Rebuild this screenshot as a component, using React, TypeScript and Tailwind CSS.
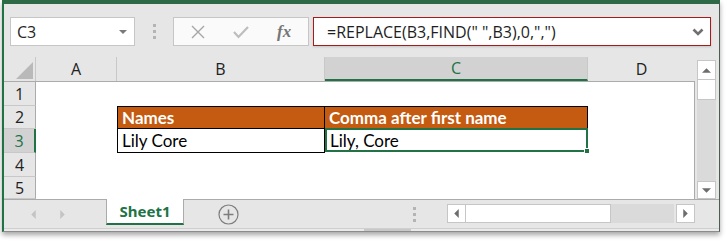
import React from 'react';

const colWidths = ['w-[81px]', 'w-[208px]', 'w-[263px]', 'flex-1'];

const rows = [
  { n: 1, h: 'h-[24px]' },
  { n: 2, h: 'h-[23px]' },
  { n: 3, h: 'h-[24px]' },
  { n: 4, h: 'h-[24px]' },
  { n: 5, h: 'h-[22px]' },
];

const cellFont = { fontFamily: 'Lato, "Open Sans", sans-serif' };
const uiFont = { fontFamily: '"Open Sans", "Noto Sans", sans-serif' };

const Tri = ({ dir, color = '#6d6d6d', size = 8 }: { dir: 'up' | 'down' | 'left' | 'right'; color?: string; size?: number }) => {
  const pts = {
    up: '0,6 4,2 8,6',
    down: '0,2 8,2 4,6',
    left: '6,0 6,8 2,4',
    right: '2,0 2,8 6,4',
  }[dir];
  return (
    <svg width={size} height={size} viewBox="0 0 8 8">
      <polygon points={pts} fill={color} />
    </svg>
  );
};

function Cell({ row, col }: { row: number; col: number }) {
  const w = colWidths[col];
  if (row === 2 && (col === 1 || col === 2)) {
    return (
      <div
        className={`${w} h-full bg-[#c55a11] border border-black ${col === 2 ? 'border-l-0' : ''} flex items-center pl-[4px] text-white font-bold text-[17px]`}
        style={cellFont}
      >
        {col === 1 ? 'Names' : 'Comma after first name'}
      </div>
    );
  }
  if (row === 3 && col === 1) {
    return (
      <div className={`${w} h-full border border-t-0 border-black flex items-center pl-[4px] pt-[1px] text-[17px] text-black`} style={cellFont}>
        Lily Core
      </div>
    );
  }
  if (row === 3 && col === 2) {
    return (
      <div className={`${w} h-full relative border-2 border-[#217346] -mt-[1px] flex items-center pl-[3px] pt-[1px] text-[17px] text-black`} style={cellFont}>
        Lily, Core
        <div className="absolute right-[-4px] bottom-[-4px] w-[6px] h-[6px] bg-[#217346] border border-white" />
      </div>
    );
  }
  return <div className={`${w} h-full`} />;
}

export default function App() {
  return (
    <div className="w-[728px] h-[241px] bg-white pl-[2px]">
      <div className="w-[718px] h-[232px] bg-[#e6e6e6] border-l-2 border-l-[#217346] border-t-4 border-t-[#2e6a46] border-r border-r-[#4d5b52] border-b border-b-[#8c8c8c] shadow-[0_3px_5px_rgba(0,0,0,0.35)] flex flex-col">
        {/* formula bar */}
        <div className="h-[53px] pt-[13px] pl-[6px] flex items-start">
          <div className="w-[125px] h-[29px] bg-white border border-[#c6c6c6] flex items-center justify-between pl-[6px] pr-[7px] text-[16px] text-[#262626]" style={uiFont}>
            <span>C3</span>
            <Tri dir="down" color="#7a7a7a" />
          </div>
          <div className="w-[38px] h-[29px] flex flex-col items-center justify-center gap-[3px]">
            <div className="w-[3px] h-[3px] bg-[#b4b4b4]" />
            <div className="w-[3px] h-[3px] bg-[#b4b4b4]" />
            <div className="w-[3px] h-[3px] bg-[#b4b4b4]" />
          </div>
          <div className="w-[136px] h-[29px] bg-[#fafafa] border border-[#c6c6c6] flex items-center">
            <svg width="14" height="14" viewBox="0 0 14 14" className="ml-[17px]">
              <path d="M1 1 L13 13 M13 1 L1 13" stroke="#a6a6a6" strokeWidth="1.4" />
            </svg>
            <svg width="16" height="14" viewBox="0 0 16 14" className="ml-[28px]">
              <path d="M1 7 L5.5 12 L15 2" stroke="#bdbdbd" strokeWidth="2.2" fill="none" />
            </svg>
            <span className="ml-[28px] italic font-bold text-[17px] text-[#767676]" style={{ fontFamily: '"Liberation Serif", "DejaVu Serif", serif' }}>
              fx
            </span>
          </div>
          <div className="ml-[4px] w-[398px] h-[29px] bg-white border border-[#a31d1d] shadow-[0_1px_2px_rgba(0,0,0,0.15)] flex items-center justify-between pl-[13px] pr-[6px] text-[16px] text-[#1e1e1e]" style={uiFont}>
            <span>=REPLACE(B3,FIND(" ",B3),0,",")</span>
            <svg width="12" height="8" viewBox="0 0 12 8">
              <path d="M1.5 1.5 L6 6 L10.5 1.5" stroke="#707070" strokeWidth="2.6" fill="none" />
            </svg>
          </div>
        </div>

        {/* grid */}
        <div className="h-[142px] flex">
          <div className="w-[691px] flex flex-col">
            <div className="h-[25px] flex border-b border-[#ababab]" style={uiFont}>
              <div className="w-[32px] h-full border-r border-[#c8c8c8] flex items-end justify-end pr-[2px] pb-[2px]">
                <svg width="17" height="17" viewBox="0 0 17 17">
                  <polygon points="17,0 17,17 0,17" fill="#b9b9b9" />
                </svg>
              </div>
              {['A', 'B', 'C', 'D'].map((c, i) => (
                <div
                  key={c}
                  className={`${colWidths[i]} h-full flex items-center justify-center text-[16px] ${
                    c === 'C'
                      ? 'bg-[#d2d2d2] text-[#217346] border-b-2 border-[#217346] -mb-[1px] border-r border-r-[#c8c8c8]'
                      : i < 3
                      ? 'border-r border-[#c8c8c8] text-[#222]'
                      : 'text-[#222]'
                  }`}
                >
                  {c}
                </div>
              ))}
            </div>
            <div className="flex-1 flex flex-col">
              {rows.map((r) => (
                <div key={r.n} className={`${r.h} flex`}>
                  <div
                    className={`w-[32px] h-full flex items-center justify-center text-[16px] border-b border-[#c8c8c8] ${
                      r.n === 3 ? 'bg-[#d2d2d2] text-[#217346] border-r-2 border-r-[#217346]' : 'border-r border-r-[#ababab] text-[#222]'
                    }`}
                    style={uiFont}
                  >
                    {r.n}
                  </div>
                  <div className="flex-1 flex bg-white border-r border-[#ababab]">
                    {[0, 1, 2, 3].map((c) => (
                      <Cell key={c} row={r.n} col={c} />
                    ))}
                  </div>
                </div>
              ))}
            </div>
          </div>
          {/* vertical scrollbar */}
          <div className="w-[24px] pl-[2px] pr-[3px] pt-[3px] flex flex-col">
            <div className="h-[20px] bg-white border border-[#c6c6c6] flex items-center justify-center">
              <Tri dir="up" color="#6d6d6d" size={9} />
            </div>
            <div className="h-[20px] bg-white border border-[#c6c6c6] border-t-0" />
            <div className="flex-1 bg-[#dadada]" />
            <div className="h-[18px] bg-white border border-[#c6c6c6] flex items-center justify-center">
              <Tri dir="down" color="#6d6d6d" size={9} />
            </div>
          </div>
        </div>

        {/* sheet tabs */}
        <div className="h-[29px] border-t border-[#ababab] flex items-start">
          <div className="w-[102px] h-full flex items-center pl-[25px] gap-[20px]">
            <Tri dir="left" color="#c4c4c4" size={9} />
            <Tri dir="right" color="#c4c4c4" size={9} />
          </div>
          <div className="-mt-[1px] w-[78px] h-[26px] bg-white border-x border-[#ababab] border-b-2 border-b-[#217346] flex items-center justify-center text-[15px] font-bold text-[#217346]" style={{ fontFamily: '"Noto Sans", "Open Sans", sans-serif' }}>
            Sheet1
          </div>
          <div className="w-[88px] h-full flex items-center pl-[34px]">
            <svg width="21" height="21" viewBox="0 0 21 21">
              <circle cx="10.5" cy="10.5" r="9.5" stroke="#7d7d7d" strokeWidth="1.2" fill="none" />
              <path d="M10.5 5.5 V15.5 M5.5 10.5 H15.5" stroke="#7d7d7d" strokeWidth="1.6" />
            </svg>
          </div>
          <div className="flex-1 h-full flex items-center justify-end pr-[17px] gap-[3px]">
            <div className="flex flex-col gap-[3px] mr-[14px]">
              <div className="w-[3px] h-[3px] bg-[#b4b4b4]" />
              <div className="w-[3px] h-[3px] bg-[#b4b4b4]" />
              <div className="w-[3px] h-[3px] bg-[#b4b4b4]" />
            </div>
          </div>
          <div className="w-[248px] pt-[4px] flex">
            <div className="w-[19px] h-[19px] bg-white border border-[#c6c6c6] flex items-center justify-center">
              <Tri dir="left" color="#6d6d6d" size={9} />
            </div>
            <div className="w-[145px] h-[19px] bg-white border border-[#c6c6c6] border-l-0" />
            <div className="w-[63px] h-[19px] bg-[#dadada]" />
            <div className="ml-[2px] w-[19px] h-[19px] bg-white border border-[#c6c6c6] flex items-center justify-center">
              <Tri dir="right" color="#6d6d6d" size={9} />
            </div>
          </div>
          <div className="w-[24px]" />
        </div>

        {/* bottom strip */}
        <div className="h-[3px] border-t border-[#cfcfcf] bg-[#eaeaea] flex">
          <div className="ml-[360px] w-[47px] h-full bg-[#c8c8c8]" />
        </div>
      </div>
    </div>
  );
}
